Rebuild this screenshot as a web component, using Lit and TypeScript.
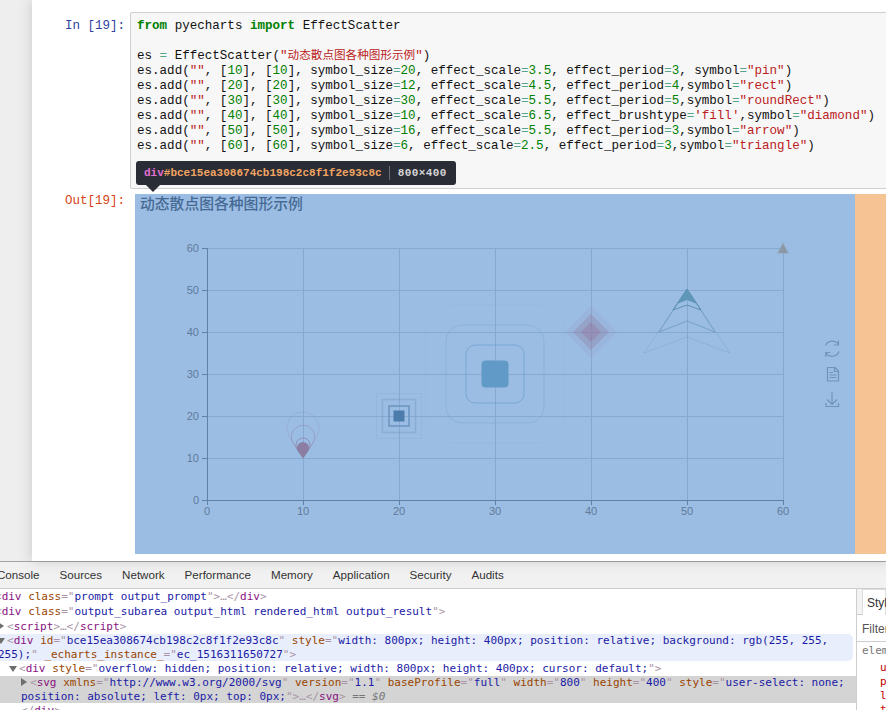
import { LitElement, html, css, svg } from "lit";
import { customElement } from "lit/decorators.js";

const CODE = [
  `es = EffectScatter("动态散点图各种图形示例")`,
  `es.add("", [10], [10], symbol_size=20, effect_scale=3.5, effect_period=3, symbol="pin")`,
  `es.add("", [20], [20], symbol_size=12, effect_scale=4.5, effect_period=4,symbol="rect")`,
  `es.add("", [30], [30], symbol_size=30, effect_scale=5.5, effect_period=5,symbol="roundRect")`,
  `es.add("", [40], [40], symbol_size=10, effect_scale=6.5, effect_brushtype='fill',symbol="diamond")`,
  `es.add("", [50], [50], symbol_size=16, effect_scale=5.5, effect_period=3,symbol="arrow")`,
  `es.add("", [60], [60], symbol_size=6, effect_scale=2.5, effect_period=3,symbol="triangle")`,
];

const TABS = ["Console", "Sources", "Network", "Performance", "Memory", "Application", "Security", "Audits"];

function highlight(line: string) {
  const parts = line.split(/("[^"]*"|'[^']*'|\b\d+(?:\.\d+)?\b|=)/);
  return parts.map((p) => {
    if (p.startsWith('"') && /[^\x00-\x7f]/.test(p)) {
      return html`<span class="str">"<span class="cjk">${p.slice(1, -1)}</span>"</span>`;
    }
    if (p.startsWith('"') || p.startsWith("'")) return html`<span class="str">${p}</span>`;
    if (/^\d/.test(p)) return html`<span class="num">${p}</span>`;
    if (p === "=") return html`<span class="op">${p}</span>`;
    return p;
  });
}

// page coordinates, the svg viewBox starts at the output's corner
const xs = [207, 303, 399, 495, 591, 687, 783];
const ys = [500, 458, 416, 374, 332, 290, 248];

function pin(cy: number, r: number) {
  // circle head with tangents running down to the tip at 303,458
  const tip = 458;
  const d = tip - cy;
  const a = Math.acos(r / d);
  const dx = r * Math.sin(a);
  const dy = r * Math.cos(a);
  return `M${303 - dx} ${cy + dy}A${r} ${r} 0 1 1 ${303 + dx} ${cy + dy}L303 ${tip}Z`;
}

function arrow(ly: number, ny: number, hw: number) {
  return `M687 289L${687 + hw} ${ly}L687 ${ny}L${687 - hw} ${ly}Z`;
}

function diamond(r: number) {
  return `M591 ${332 - r}L${591 + r} 332L591 ${332 + r}L${591 - r} 332Z`;
}

@customElement("app-root")
export class AppRoot extends LitElement {
  static styles = css`
    :host {
      display: block;
      width: 886px;
      height: 710px;
      overflow: hidden;
      background: #eee;
      position: relative;
    }
    .notebook {
      margin-left: 32px;
      height: 561px;
      background: #fff;
      box-shadow: 0 0 12px rgba(87, 87, 87, 0.25);
      overflow: hidden;
      display: flex;
      flex-direction: column;
      position: relative;
    }
    .cell {
      display: flex;
      width: 900px;
    }
    .prompt {
      width: 93px;
      flex: none;
      text-align: right;
      font: 12.5px/15px "Liberation Mono", monospace;
      padding-right: 5px;
    }
    .prompt.in {
      color: #303f9f;
      padding-top: 19px;
    }
    .prompt.out {
      color: #d84315;
    }
    .input {
      position: relative;
      flex: 1;
      margin-top: 12px;
      height: 177px;
      box-sizing: border-box;
      background: #f7f7f7;
      border: 1px solid #cfcfcf;
      border-radius: 2px;
      padding: 6px 6px;
      font: 12.56px/15px "Liberation Mono", monospace;
      color: #111;
      white-space: pre;
    }
    .kw {
      color: #008000;
      font-weight: bold;
    }
    .str {
      color: #ba2121;
    }
    .cjk {
      font-family: "Noto Sans CJK SC", sans-serif;
      font-size: 11.6px;
      line-height: 0;
    }
    .num {
      color: #008000;
    }
    .op {
      color: #55a58a;
    }
    .tip {
      position: absolute;
      left: 5px;
      top: 148px;
      height: 24px;
      width: 320px;
      box-sizing: border-box;
      background: #2a2c36;
      border-radius: 3px;
      display: flex;
      align-items: center;
      padding-left: 8px;
      font: bold 11px/24px "Liberation Mono", monospace;
      z-index: 2;
    }
    .tip::after {
      content: "";
      position: absolute;
      left: 10px;
      top: 24px;
      border: 7px solid transparent;
      border-top-color: #2a2c36;
      border-bottom: 0;
    }
    .tip b {
      color: #e36fd0;
    }
    .tip i {
      color: #f2a562;
      font-style: normal;
    }
    .tip u {
      text-decoration: none;
      color: #d6d6d6;
      margin-left: 7px;
      padding-left: 8px;
      border-left: 1px solid #6a6c74;
      height: 14px;
      line-height: 14px;
      letter-spacing: 0.4px;
    }
    .output {
      margin-top: 5px;
      height: 360px;
      display: flex;
      width: 900px;
    }
    .chart {
      flex: none;
      width: 720px;
      height: 360px;
      margin-left: 5px;
      background: #9bbde3;
    }
    .chart svg {
      display: block;
    }
    .margin-box {
      flex: 1;
      background: #f6c395;
    }
    .devtools {
      height: 149px;
      background: #fff;
      border-top: 1px solid #a3a3a3;
      box-sizing: border-box;
      display: flex;
      flex-direction: column;
    }
    .tabs {
      height: 27px;
      flex: none;
      box-sizing: border-box;
      background: #f1f1f1;
      border-bottom: 1px solid #cdcdcd;
      display: flex;
      font: 11.6px/26px "Liberation Sans", sans-serif;
      color: #333;
      overflow: hidden;
    }
    .tabs span {
      padding: 0 10px;
    }
    .tabs span:first-child {
      margin-left: -13px;
    }
    .panes {
      flex: 1;
      display: flex;
      min-height: 0;
    }
    .dom {
      width: 856px;
      flex: none;
      overflow: hidden;
      font: 11px/15px "DejaVu Sans Mono", monospace;
      color: #881280;
    }
    .row {
      height: 15px;
      white-space: pre;
    }
    .row.lead {
      margin-left: -5px;
    }
    .row.script {
      margin-left: -2px;
    }
    .row.inner {
      padding-left: 9px;
    }
    .row.close {
      padding-left: 21px;
    }
    .row.wrap {
      height: 27px;
      line-height: 13.5px;
    }
    .row.sel {
      background: #e8eefb;
      border-radius: 0 5px 5px 0;
      margin-right: 3px;
    }
    .row.cur {
      background: #d4d4d4;
      padding-left: 21px;
    }
    .l {
      height: 13.5px;
    }
    .l.open {
      margin-left: -3px;
    }
    .l.back {
      margin-left: -2px;
    }
    .t {
      color: #a894a6;
    }
    .a {
      color: #994500;
    }
    .v {
      color: #1a1aa6;
    }
    .m {
      color: #777;
    }
    .tw {
      display: inline-block;
      width: 0;
      height: 0;
      border-style: solid;
      border-color: transparent;
    }
    .tw.right {
      border-width: 4px 0 4px 6px;
      border-left-color: #6e6e6e;
      margin-right: 3px;
    }
    .tw.down {
      border-width: 6px 4px 0 4px;
      border-top-color: #6e6e6e;
      margin-right: 2px;
    }
    .styles {
      flex: 1;
      border-left: 1px solid #cdcdcd;
      overflow: hidden;
      display: flex;
      flex-direction: column;
      font: 12px/26px "Liberation Sans", sans-serif;
      color: #333;
    }
    .styles .head {
      height: 26px;
      flex: none;
      background: #f3f3f3;
      border-bottom: 1px solid #cdcdcd;
      padding-left: 5px;
      box-sizing: border-box;
    }
    .styles .head span {
      display: block;
      height: 26px;
      background: #fff;
      border: 1px solid #ddd;
      border-bottom: 0;
      padding-left: 4px;
      white-space: nowrap;
      box-sizing: border-box;
    }
    .styles .filter {
      height: 27px;
      flex: none;
      box-sizing: border-box;
      border-bottom: 1px solid #cdcdcd;
      padding-left: 5px;
      color: #555;
      line-height: 29px;
    }
    .styles .rules {
      font: 11px/14px "DejaVu Sans Mono", monospace;
      padding: 2px 0 0 5px;
      color: #777;
    }
    .styles .rules div {
      padding-left: 18px;
      color: #c80000;
      white-space: nowrap;
    }
    .styles .rules div:first-child {
      padding-left: 0;
      color: #777;
      margin-bottom: 3px;
    }
  `;

  chart() {
    const grid = "#86a9d1";
    const axis = "#5d81a8";
    const label = "#5f7a9b";
    return html`<svg width="720" height="360" viewBox="135 194 720 360">
      <text x="140" y="209" font-family="'Noto Sans CJK SC', sans-serif" font-size="14.8" font-weight="500" fill="#466a94">动态散点图各种图形示例</text>
      ${xs.slice(1).map((x) => svg`<line x1=${x + 0.5} x2=${x + 0.5} y1="248" y2="500" stroke=${grid}/>`)}
      ${ys.slice(1).map((y) => svg`<line x1="207" x2="783" y1=${y + 0.5} y2=${y + 0.5} stroke=${grid}/>`)}
      <line x1="207.5" x2="207.5" y1="248" y2="500" stroke=${axis}/>
      <line x1="207" x2="783" y1="500.5" y2="500.5" stroke=${axis}/>
      ${ys.map((y) => svg`<line x1="202" x2="207" y1=${y + 0.5} y2=${y + 0.5} stroke=${axis}/>`)}
      ${xs.map((x) => svg`<line x1=${x + 0.5} x2=${x + 0.5} y1="500" y2="505" stroke=${axis}/>`)}
      <g font-family="'Liberation Sans', sans-serif" font-size="11" fill=${label}>
        ${ys.map((y, i) => svg`<text x="199" y=${y + 3.5} text-anchor="end">${i * 10}</text>`)}
        ${xs.map((x, i) => svg`<text x=${x} y="515" text-anchor="middle">${i * 10}</text>`)}
      </g>

      <!-- pin -->
      <g fill="none" stroke="#8f86ab">
        <path d=${pin(428, 16)} stroke-opacity="0.25"/>
        <path d=${pin(437, 11.7)} stroke-opacity="0.5"/>
        <path d=${pin(445, 7)} stroke-opacity="0.85"/>
      </g>
      <path d=${pin(448, 6)} fill="#8c7ea3"/>

      <!-- rect -->
      <g fill="none" stroke="#7da2c9">
        <rect x="376.5" y="393.5" width="45" height="45" stroke-opacity="0.25"/>
        <rect x="382.5" y="399.5" width="33" height="33" stroke-width="1.5" stroke-opacity="0.6"/>
        <rect x="389" y="406" width="20" height="20" stroke-width="1.5" stroke="#6b94bf"/>
      </g>
      <rect x="393.5" y="410.5" width="11" height="11" fill="#4c7cab"/>

      <!-- roundRect -->
      <g fill="none" stroke="#6da0cc">
        <rect x="426" y="305" width="138" height="138" rx="24" stroke-opacity="0.08"/>
        <rect x="446" y="325" width="98" height="98" rx="16" stroke-opacity="0.35"/>
        <rect x="466" y="345" width="58" height="58" rx="9" stroke-opacity="0.75"/>
      </g>
      <rect x="481.500" y="360.500" width="27" height="27" rx="4" fill="#619ac6"/>

      <!-- diamond -->
      <path d=${diamond(26)} fill="#8f97c0" fill-opacity="0.2"/>
      <path d=${diamond(18)} fill="#8f80a8" fill-opacity="0.35"/>
      <path d=${diamond(10)} fill="#93749f" fill-opacity="0.4"/>

      <!-- arrow -->
      <g fill="none" stroke="#5f90b5">
        <path d=${arrow(353, 337, 43)} stroke-opacity="0.25"/>
        <path d=${arrow(332, 321, 28)} stroke-opacity="0.6"/>
        <path d=${arrow(310, 305, 14)}/>
      </g>
      <path d=${arrow(304, 300, 10)} fill="#5f97b8"/>

      <!-- triangle -->
      <path d="M783 243.500L788 253L778 253Z" fill="#8d98a6"/>
      <path d="M783 241L790 254L776 254Z" fill="#8d98a6" fill-opacity="0.2"/>

      <!-- toolbox -->
      <g fill="none" stroke="#6f93ba" stroke-width="1.2">
        <path d="M825.500 345.500A7.500 7.500 0 0 1 838.500 344.500M838.500 340.500V345H834"/>
        <path d="M839 351.500A7.500 7.500 0 0 1 825.800 353M825.800 357V352.500H830.200"/>
        <path d="M827.500 367.500H835L838.500 371V381H827.500ZM834.500 367.500V371.500H838.500M829.500 372.500H833M829.500 375H836.500M829.500 377.500H836.500"/>
        <path d="M832 392V404.500M827 399.500L832 404.500L837 399.500M826 403V406.500H838.500V403"/>
      </g>
    </svg>`;
  }

  render() {
    return html`
      <div class="notebook">
        <div class="cell">
          <div class="prompt in">In [19]:</div>
          <div class="input"><span class="kw">from</span> pyecharts <span class="kw">import</span> EffectScatter

${CODE.map((l) => html`${highlight(l)}
`)}<div class="tip"><b>div</b><i>#bce15ea308674cb198c2c8f1f2e93c8c</i><u>800×400</u></div></div>
        </div>
        <div class="output">
          <div class="prompt out">Out[19]:</div>
          <div class="chart">${this.chart()}</div>
          <div class="margin-box"></div>
        </div>
      </div>
      <div class="devtools">
        <div class="tabs">${TABS.map((t) => html`<span>${t}</span>`)}</div>
        <div class="panes">
          <div class="dom">
            <div class="row lead"><span class="t">&lt;</span>div <span class="a">class</span><span class="t">="</span><span class="v">prompt output_prompt</span><span class="t">"&gt;…&lt;/</span>div<span class="t">&gt;</span></div>
            <div class="row lead"><span class="t">&lt;</span>div <span class="a">class</span><span class="t">="</span><span class="v">output_subarea output_html rendered_html output_result</span><span class="t">"&gt;</span></div>
            <div class="row script"><span class="tw right"></span><span class="t">&lt;</span>script<span class="t">&gt;…&lt;/</span>script<span class="t">&gt;</span></div>
            <div class="row wrap sel"><div class="l open"><span class="tw down"></span><span class="t">&lt;</span>div <span class="a">id</span><span class="t">="</span><span class="v">bce15ea308674cb198c2c8f1f2e93c8c</span><span class="t">"</span> <span class="a">style</span><span class="t">="</span><span class="v">width: 800px; height: 400px; position: relative; background: rgb(255, 255,</span></div><div class="l back"><span class="v">255);</span><span class="t">"</span> <span class="a">_echarts_instance_</span><span class="t">="</span><span class="v">ec_1516311650727</span><span class="t">"&gt;</span></div></div>
            <div class="row inner"><span class="tw down"></span><span class="t">&lt;</span>div <span class="a">style</span><span class="t">="</span><span class="v">overflow: hidden; position: relative; width: 800px; height: 400px; cursor: default;</span><span class="t">"&gt;</span></div>
            <div class="row wrap cur"><div class="l"><span class="tw right"></span><span class="t">&lt;</span>svg <span class="a">xmlns</span><span class="t">="</span><span class="v">http://www.w3.org/2000/svg</span><span class="t">"</span> <span class="a">version</span><span class="t">="</span><span class="v">1.1</span><span class="t">"</span> <span class="a">baseProfile</span><span class="t">="</span><span class="v">full</span><span class="t">"</span> <span class="a">width</span><span class="t">="</span><span class="v">800</span><span class="t">"</span> <span class="a">height</span><span class="t">="</span><span class="v">400</span><span class="t">"</span> <span class="a">style</span><span class="t">="</span><span class="v">user-select: none;</span></div><div class="l"><span class="v">position: absolute; left: 0px; top: 0px;</span><span class="t">"&gt;…&lt;/</span>svg<span class="t">&gt;</span> <span class="m">== <i>$0</i></span></div></div>
            <div class="row close"><span class="t">&lt;/</span>div<span class="t">&gt;</span></div>
          </div>
          <div class="styles">
            <div class="head"><span>Styles</span></div>
            <div class="filter">Filter</div>
            <div class="rules">
              <div>element.style</div>
              <div>user-select</div>
              <div>position</div>
              <div>left</div>
              <div>top</div>
            </div>
          </div>
        </div>
      </div>
    `;
  }
}
